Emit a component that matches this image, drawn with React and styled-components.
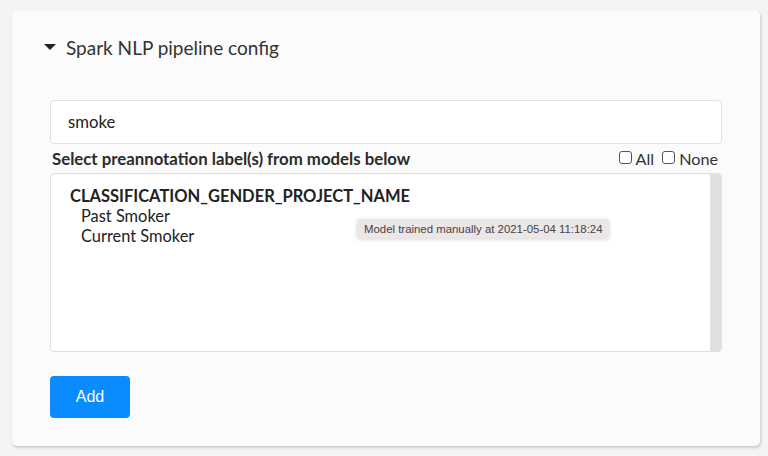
import React from "react";
import styled, { createGlobalStyle } from "styled-components";

const Global = createGlobalStyle`
  html, body { margin: 0; padding: 0; background: #f4f4f4; }
  body { font-family: Lato, "Open Sans", sans-serif; color: #2b2b2b; }
  * { box-sizing: border-box; }
`;

const Page = styled.div`
  padding: 10px 8px 10px 12px;
`;

const Card = styled.section`
  width: 748px;
  height: 436px;
  background: #fbfbfb;
  border-radius: 5px;
  box-shadow: 0 0 2px rgba(0, 0, 0, 0.08), 1px 2px 3px rgba(0, 0, 0, 0.16);
  padding: 26px 38px 28px 38px;
  display: flex;
  flex-direction: column;
`;

const Header = styled.div`
  display: flex;
  align-items: center;
  gap: 10px;
  margin-left: -6px;
  height: 22px;
  font-size: 19px;
  color: #333;
`;

const Caret = styled.span`
  width: 0;
  height: 0;
  border-left: 6px solid transparent;
  border-right: 6px solid transparent;
  border-top: 6px solid #222;
  margin-top: -1px;
`;

const Search = styled.div`
  margin-top: 42px;
  height: 44px;
  background: #fff;
  border: 1px solid #e2e2e2;
  border-radius: 4px;
  display: flex;
  align-items: center;
  padding-left: 17px;
  font-size: 16.7px;
  color: #222;
`;

const LabelRow = styled.div`
  height: 29px;
  display: flex;
  align-items: center;
  justify-content: space-between;
  padding: 0 4px 0 2px;
`;

const Label = styled.span`
  font-weight: 700;
  font-size: 16.8px;
  color: #2b2b2b;
`;

const Checks = styled.div`
  display: flex;
  align-items: center;
  gap: 8px;
  font-size: 16.2px;
  color: #333;
`;

const Check = styled.label`
  display: flex;
  align-items: center;
  gap: 4px;
`;

const Box = styled.span`
  width: 13px;
  height: 13px;
  border: 1px solid #555;
  border-radius: 3px;
  background: #fff;
  margin-top: -2px;
`;

const List = styled.div`
  position: relative;
  height: 179px;
  background: #fff;
  border: 1px solid #e0e0e0;
  border-radius: 4px;
  display: flex;
  overflow: hidden;
`;

const ListBody = styled.div`
  flex: 1;
  padding: 12px 0 0 19px;
`;

const Track = styled.div`
  width: 11px;
  background: #e0e0e0;
`;

const ModelName = styled.div`
  font-weight: 700;
  font-size: 16.5px;
  line-height: 20px;
  color: #222;
`;

const Item = styled.div`
  padding-left: 11px;
  font-size: 16.4px;
  line-height: 20px;
  color: #222;
`;

const Tooltip = styled.div`
  position: absolute;
  left: 306px;
  top: 45px;
  width: 252px;
  height: 19px;
  display: flex;
  align-items: center;
  padding-left: 7px;
  background: #ece6e6;
  border-radius: 3px;
  box-shadow: 0 1px 4px rgba(0, 0, 0, 0.18);
  font-family: "Liberation Sans", Arial, sans-serif;
  font-size: 11.4px;
  color: #444;
  white-space: nowrap;
`;

const Button = styled.button`
  margin-top: 24px;
  width: 80px;
  height: 42px;
  border: none;
  border-radius: 4px;
  background: #0a8cff;
  color: #fff;
  font-family: "Liberation Sans", Arial, sans-serif;
  font-size: 16px;
  font-weight: 400;
  cursor: pointer;
`;

export default function App() {
  return (
    <>
      <Global />
      <Page>
        <Card>
          <Header>
            <Caret />
            <span>Spark NLP pipeline config</span>
          </Header>
          <Search>smoke</Search>
          <LabelRow>
            <Label>Select preannotation label(s) from models below</Label>
            <Checks>
              <Check>
                <Box />
                All
              </Check>
              <Check>
                <Box />
                None
              </Check>
            </Checks>
          </LabelRow>
          <List>
            <ListBody>
              <ModelName>CLASSIFICATION_GENDER_PROJECT_NAME</ModelName>
              <Item>Past Smoker</Item>
              <Item>Current Smoker</Item>
            </ListBody>
            <Track />
            <Tooltip>Model trained manually at 2021-05-04 11:18:24</Tooltip>
          </List>
          <div>
            <Button>Add</Button>
          </div>
        </Card>
      </Page>
    </>
  );
}
